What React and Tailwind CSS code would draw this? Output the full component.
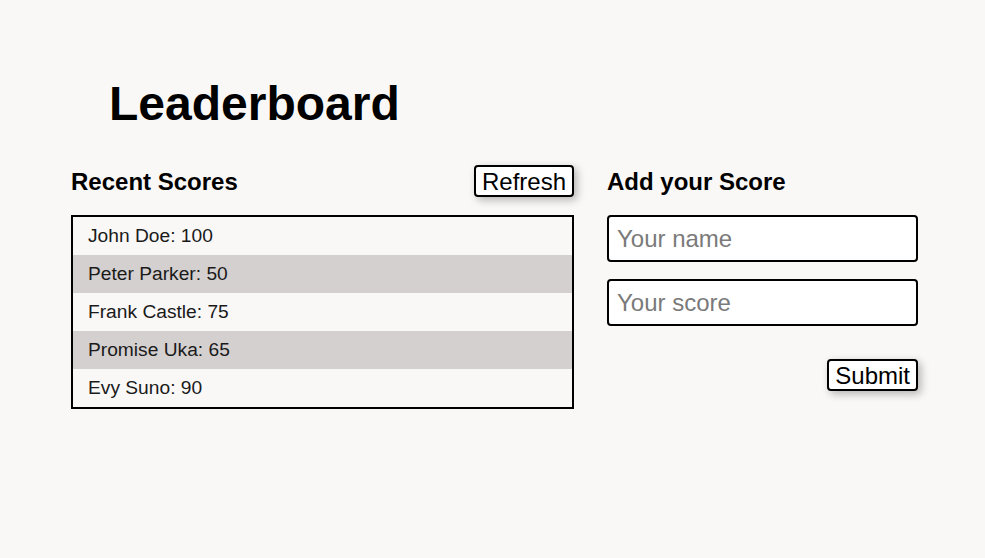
export default function App() {
  const scores = [
    { name: 'John Doe', score: 100 },
    { name: 'Peter Parker', score: 50 },
    { name: 'Frank Castle', score: 75 },
    { name: 'Promise Uka', score: 65 },
    { name: 'Evy Suno', score: 90 },
  ]

  return (
    <div className="min-h-screen bg-[#f9f8f7] text-black font-['Liberation_Sans',Arial,sans-serif]">
      <div className="pl-[71px] pt-[77px]">
        <h1 className="pl-[38px] text-[48px] font-bold leading-[53px]">Leaderboard</h1>

        <div className="mt-[35px] flex gap-[33px]">
          <div className="w-[503px] shrink-0">
            <div className="flex h-8 items-center justify-between">
              <h2 className="text-[24px] font-bold leading-[27px]">Recent Scores</h2>
              <button
                type="button"
                className="h-8 rounded-[4px] border-2 border-black bg-white px-[6px] text-[24px] leading-[27px] shadow-[3px_3px_8px_rgba(0,0,0,0.28)]"
              >
                Refresh
              </button>
            </div>
            <ul className="mt-[18px] border-2 border-black">
              {scores.map((s, i) => (
                <li
                  key={s.name}
                  className={
                    'px-[15px] py-2 text-[19.2px] leading-[22px] text-[#1a1a1a] ' +
                    (i % 2 === 1 ? 'bg-[#d4d0cf]' : 'bg-[#f9f8f7]')
                  }
                >
                  {s.name}: {s.score}
                </li>
              ))}
            </ul>
          </div>

          <div className="w-[311px] shrink-0">
            <div className="flex h-8 items-center">
              <h2 className="text-[24px] font-bold leading-[27px]">Add your Score</h2>
            </div>
            <form className="mt-[18px] flex flex-col" onSubmit={(e) => e.preventDefault()}>
              <input
                type="text"
                placeholder="Your name"
                className="h-[47px] rounded-[4px] border-2 border-black bg-white px-2 text-[24px] outline-none placeholder:text-[#7a7a7a]"
              />
              <input
                type="text"
                placeholder="Your score"
                className="mt-[17px] h-[47px] rounded-[4px] border-2 border-black bg-white px-2 text-[24px] outline-none placeholder:text-[#7a7a7a]"
              />
              <div className="mt-[33px] flex justify-end">
                <button
                  type="submit"
                  className="h-8 rounded-[4px] border-2 border-black bg-white px-[6px] text-[24px] leading-[27px] shadow-[3px_3px_8px_rgba(0,0,0,0.28)]"
                >
                  Submit
                </button>
              </div>
            </form>
          </div>
        </div>
      </div>
    </div>
  )
}
